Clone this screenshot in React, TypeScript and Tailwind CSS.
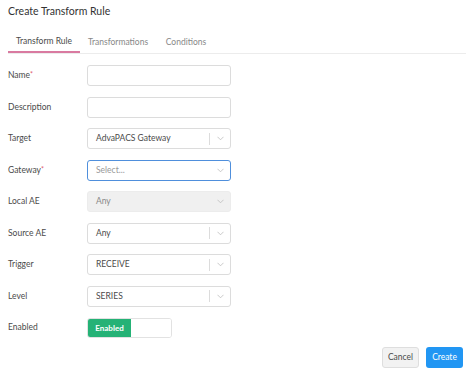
import React from "react";

function Chevron() {
  return (
    <svg width="7" height="5" viewBox="0 0 7 5" fill="none" className="text-[#bcbcbc]">
      <path d="M0.5 0.8 L3.5 3.8 L6.5 0.8" stroke="currentColor" strokeWidth="0.8" />
    </svg>
  );
}

function Label({ text, required }: { text: string; required?: boolean }) {
  return (
    <div className="w-[79px] shrink-0 text-[8.5px] text-[#4a4a4a]">
      {text}
      {required && <span className="text-[#e0566b] text-[7px] align-top">*</span>}
    </div>
  );
}

function TextInput() {
  return <div className="w-[144px] h-full rounded-[3px] border border-[#dcdcdc] bg-white" />;
}

function Select({
  value,
  placeholder,
  separator = true,
  disabled,
  focused,
}: {
  value?: string;
  placeholder?: string;
  separator?: boolean;
  disabled?: boolean;
  focused?: boolean;
}) {
  return (
    <div
      className={
        "w-[144px] h-full rounded-[3px] flex items-center " +
        (focused
          ? "border-[1.5px] border-[#4f8fdc] bg-white"
          : disabled
          ? "border border-[#ececec] bg-[#f0f0f0]"
          : "border border-[#dcdcdc] bg-white")
      }
    >
      <div
        className={
          "flex-1 pl-[8px] text-[8.5px] " +
          (placeholder ? "text-[#999]" : disabled ? "text-[#888]" : "text-[#4a4a4a]")
        }
      >
        {value ?? placeholder}
      </div>
      {separator && <div className="w-px h-[12px] bg-[#dcdcdc]" />}
      <div className="w-[20px] flex justify-center">
        <Chevron />
      </div>
    </div>
  );
}

function Row({ children }: { children: React.ReactNode }) {
  return <div className="flex items-center h-[21px]">{children}</div>;
}

export default function App() {
  return (
    <div
      className="w-[474px] h-[376px] bg-white relative overflow-hidden"
      style={{ fontFamily: 'Lato, "Open Sans", sans-serif' }}
    >
      <div className="pl-[8px] pt-[4px] text-[10.5px] leading-[14px] text-[#333]">
        Create Transform Rule
      </div>

      <div className="mt-[14px] mx-[8px] flex border-b border-[#ececec] text-[8.5px]">
        <div className="w-[72px] h-[21px] flex items-center justify-center text-[#4a4a4a] border-b-2 border-[#d97aa0] -mb-px">
          Transform Rule
        </div>
        <div className="w-[76px] h-[21px] flex items-center justify-center text-[#888]">
          Transformations
        </div>
        <div className="w-[60px] h-[21px] flex items-center justify-center text-[#888]">
          Conditions
        </div>
      </div>

      <div className="pl-[8px] pt-[11px] flex flex-col gap-[10.5px]">
        <Row>
          <Label text="Name" required />
          <TextInput />
        </Row>
        <Row>
          <Label text="Description" />
          <TextInput />
        </Row>
        <Row>
          <Label text="Target" />
          <Select value="AdvaPACS Gateway" />
        </Row>
        <Row>
          <Label text="Gateway" required />
          <Select placeholder="Select..." separator={false} focused />
        </Row>
        <Row>
          <Label text="Local AE" />
          <Select value="Any" separator={false} disabled />
        </Row>
        <Row>
          <Label text="Source AE" />
          <Select value="Any" />
        </Row>
        <Row>
          <Label text="Trigger" />
          <Select value="RECEIVE" />
        </Row>
        <Row>
          <Label text="Level" />
          <Select value="SERIES" />
        </Row>
        <Row>
          <Label text="Enabled" />
          <div className="w-[85px] h-[20px] flex rounded-[3px] border border-[#e2e2e2] overflow-hidden">
            <div className="w-[43px] bg-[#25b276] text-white text-[8px] font-bold flex items-center justify-center">
              Enabled
            </div>
            <div className="flex-1 bg-white" />
          </div>
        </Row>
      </div>

      <div className="absolute right-[11px] bottom-[8px] flex gap-[7px] text-[8.5px]">
        <button className="w-[37px] h-[21px] rounded-[3px] bg-[#f2f2f2] border border-[#dedede] text-[#4a4a4a]">
          Cancel
        </button>
        <button className="w-[37px] h-[21px] rounded-[3px] bg-[#2196f3] text-white">Create</button>
      </div>
    </div>
  );
}
